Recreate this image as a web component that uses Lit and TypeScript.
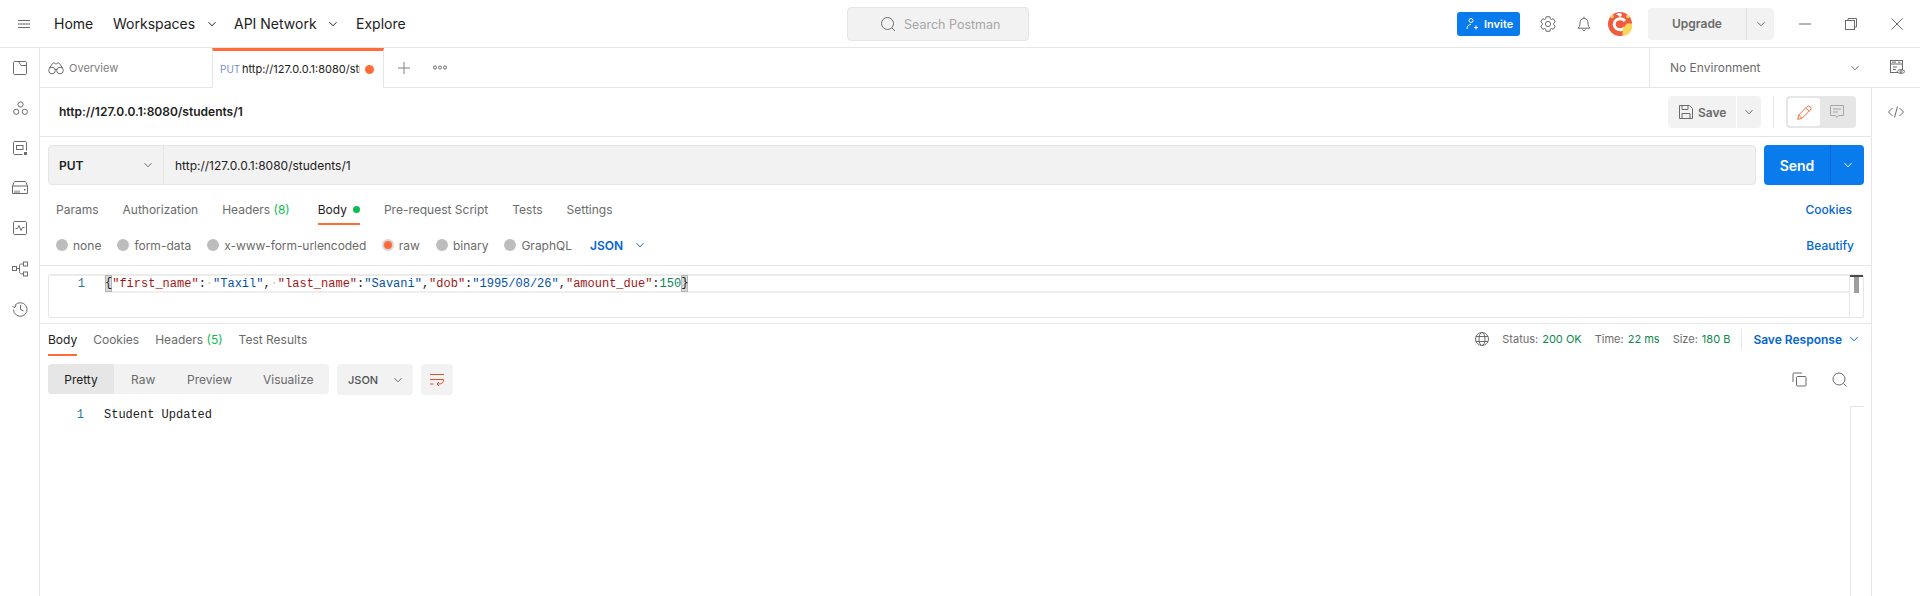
import { LitElement, html, css, svg } from "lit";
import { customElement } from "lit/decorators.js";

const chev = (c = "#6b6b6b", s = 10) => html`<svg class="chev" width=${s} height=${s} viewBox="0 0 10 10" fill="none" stroke=${c} stroke-width="1"><path d="M1.5 3.2 5 6.8l3.5-3.6"/></svg>`;
const ic = (w: number, h: number, body: unknown, stroke = "#6b6b6b") => html`<svg width=${w} height=${h} viewBox="0 0 ${w} ${h}" fill="none" stroke=${stroke} stroke-width="1">${body}</svg>`;

const gearPath = (() => {
  const pts: string[] = [];
  for (let i = 0; i < 6; i++) {
    const a = (Math.PI / 3) * i - Math.PI / 2;
    const p = (r: number, d: number) => `${(8 + r * Math.cos(a + d)).toFixed(2)} ${(8 + r * Math.sin(a + d)).toFixed(2)}`;
    pts.push(`${p(5.6, -0.42)}L${p(7.5, -0.26)}L${p(7.5, 0.26)}L${p(5.6, 0.42)}`);
  }
  return "M" + pts.join("L") + "Z";
})();

@customElement("app-root")
export class AppRoot extends LitElement {
  static styles = css`
    :host { display: block; height: 596px; overflow: hidden; background: #fff; font-family: Inter, "Noto Sans", sans-serif; font-size: 12px; color: #6b6b6b; }
    * { box-sizing: border-box; }
    svg { display: block; flex: none; }
    .top { height: 48px; border-bottom: 1px solid #e6e6e6; display: flex; align-items: center; position: relative; }
    .burger { width: 54px; padding-left: 17px; }
    .nav { display: flex; align-items: center; font-size: 14px; color: #212121; }
    .nav span { white-space: nowrap; }
    .home { width: 59px; } .ws { width: 87px; } .api { width: 87px; }
    .navchev { width: 34px; padding-left: 7px; }
    .navchev2 { width: 35px; padding-left: 7px; }
    .search-wrap { position: absolute; left: 847px; top: 7px; }
    .search { width: 182px; height: 34px; background: #f2f2f2; border: 1px solid #e6e6e6; border-radius: 4px; display: flex; align-items: center; padding-left: 32px; gap: 8px; color: #a6a6a6; font-size: 12.5px; }
    .top-right { margin-left: auto; display: flex; align-items: center; height: 100%; }
    .invite { width: 63px; height: 24px; background: #097bed; border-radius: 3px; color: #fff; font-weight: 600; font-size: 11px; display: flex; align-items: center; padding-left: 9px; gap: 6px; }
    .gear { margin-left: 20px; } .bell { margin-left: 21px; } .avatar { margin-left: 17px; }
    .upgrade { margin-left: 16px; width: 126px; height: 32px; background: #f2f2f2; border-radius: 4px; display: flex; align-items: center; font-weight: 600; }
    .upgrade b { width: 99px; text-align: center; font-weight: 600; border-right: 1px solid #e0e0e0; line-height: 32px; }
    .upgrade i { flex: 1; display: flex; justify-content: center; }
    .win { display: flex; align-items: center; margin-left: 25px; gap: 34px; padding-right: 17px; }
    .main { display: flex; height: 548px; }
    .side { width: 40px; flex: none; border-right: 1px solid #e6e6e6; display: flex; flex-direction: column; align-items: center; padding-top: 13px; padding-left: 1px; }
    .side div { height: 40px; display: flex; justify-content: center; }
    .center { flex: 1; min-width: 0; display: flex; flex-direction: column; }
    .tabs { height: 40px; border-bottom: 1px solid #e6e6e6; display: flex; flex: none; }
    .tab-ov { width: 172px; display: flex; align-items: center; padding-left: 8px; gap: 5px; color: #808080; font-size: 11px; }
    .tab-act { width: 172px; margin-bottom: -1px; background: #fff; height: 40px; border-top: 3px solid #ff6c37; border-left: 1px solid #e6e6e6; border-right: 1px solid #e6e6e6; border-bottom: 1px solid #fff; display: flex; align-items: center; padding-left: 7px; position: relative; z-index: 1; }
    .tab-act .m { font-size: 10px; color: #7a8fce; width: 22px; }
    .tab-act .u { width: 118px; overflow: hidden; white-space: nowrap; color: #212121; font-size: 11px; }
    .dot { width: 9px; height: 9px; border-radius: 50%; background: #ff6c37; margin-left: 5px; }
    .plus { margin-left: 14px; padding-top: 14px; } .more { margin-left: 23px; padding-top: 17px; }
    .env { margin-left: auto; width: 271px; border-left: 1px solid #e6e6e6; display: flex; align-items: center; padding-left: 20px; }
    .env .t { width: 180px; font-size: 12px; }
    .env .e { margin-left: 30px; }
    .body { flex: 1; display: flex; min-height: 0; }
    .work { flex: 1; min-width: 0; display: flex; flex-direction: column; }
    .rail { width: 49px; flex: none; border-left: 1px solid #e6e6e6; display: flex; justify-content: center; padding-top: 17px; padding-right: 1px; }
    .name { height: 49px; flex: none; border-bottom: 1px solid #e6e6e6; display: flex; align-items: center; padding-left: 19px; color: #212121; font-weight: 600; }
    .name > span { margin-top: -2px; }
    .name-r { margin-left: auto; display: flex; align-items: center; padding-right: 15px; }
    .save { width: 68px; height: 32px; background: #f2f2f2; border-radius: 4px 0 0 4px; display: flex; align-items: center; padding-left: 11px; gap: 5px; color: #6b6b6b; }
    .save span { font-weight: 600; }
    .savec { width: 24px; height: 32px; margin-left: 1px; background: #f2f2f2; border-radius: 0 4px 4px 0; display: flex; align-items: center; justify-content: center; }
    .vdiv { width: 1px; height: 32px; background: #e6e6e6; margin: 0 12px; }
    .toggle { width: 70px; height: 32px; background: #e6e6e6; border-radius: 4px; padding: 2px; display: flex; }
    .toggle div { width: 32px; height: 28px; display: flex; align-items: center; justify-content: center; border-radius: 3px; }
    .toggle .on { background: #fff; }
    .toggle .off { margin-left: 1px; }
    .bar { margin: 8px 7px 0 8px; height: 40px; display: flex; flex: none; }
    .bar-in { flex: 1; display: flex; background: #f2f2f2; border: 1px solid #e6e6e6; border-radius: 4px; align-items: center; }
    .method { width: 115px; height: 100%; border-right: 1px solid #e6e6e6; display: flex; align-items: center; padding-left: 10px; color: #212121; font-weight: 600; justify-content: space-between; padding-right: 10px; }
    .url { padding-left: 11px; color: #212121; }
    .send { margin-left: 8px; width: 100px; background: #097bed; border-radius: 4px; color: #fff; display: flex; align-items: center; font-weight: 600; font-size: 14px; }
    .send b { width: 67px; height: 100%; font-weight: 600; display: flex; align-items: center; justify-content: center; border-right: 1px solid #0265d2; }
    .send i { flex: 1; display: flex; justify-content: center; }
    .rtabs { height: 32px; flex: none; margin-top: 8px; display: flex; padding: 0 19px 0 8px; justify-content: space-between; }
    .rtabs .l { display: flex; gap: 24px; padding-left: 8px; }
    .t { display: flex; align-items: center; height: 32px; white-space: nowrap; position: relative; }
    .rtabs .bodytab { margin-left: 4px; }
    .act { color: #212121; }
    .act::after { content: ""; position: absolute; left: 0; right: 0; bottom: 0; height: 2px; background: #ff6c37; }
    .num { color: #0cbb52; }
    .rdot { width: 7px; height: 7px; background: #0cbb52; border-radius: 50%; margin-left: 6px; }
    .link { color: #0265d2; font-weight: 500; }
    .radios { height: 41px; flex: none; border-bottom: 1px solid #e6e6e6; display: flex; align-items: center; padding: 0 17px 0 16px; }
    .r { display: flex; align-items: center; gap: 5px; margin-right: 16px; }
    .r.x { letter-spacing: -0.06px; margin-right: 15.5px; }
    .c { width: 12px; height: 12px; border-radius: 50%; background: #bdbdbd; }
    .c.sel { background: #ff6c37; border: 2px solid #d6d6d6; }
    .js { color: #0265d2; font-weight: 600; display: flex; align-items: center; gap: 12px; margin-left: 2px; }
    .beaut { margin-left: auto; }
    .editor { margin: 8px 7px 0 8px; height: 44px; flex: none; border: 1px solid #e6e6e6; border-top: 2px solid #ebebeb; border-radius: 3px; display: flex; font-family: "Liberation Mono", monospace; font-size: 12px; }
    .ln { width: 36px; text-align: right; color: #237893; line-height: 16px; }
    .lines { flex: 1; margin-left: 20px; }
    .code { height: 17px; line-height: 16px; white-space: pre; border-bottom: 2px solid #eee; }
    .bk { display: inline-block; vertical-align: top; height: 17px; margin-top: -1px; line-height: 17px; background: #d9d9d9; box-shadow: inset 0 0 0 1px #b5b5b5; color: #212121; }
    .k { color: #a31515; } .s { color: #0451a5; } .n { color: #098658; } .p { color: #212121; }
    .w { color: #c8c8c8; }
    .sb { width: 14px; border-left: 1px solid #e6e6e6; position: relative; }
    .sb::before { content: ""; position: absolute; left: 0; right: 0; top: -1px; height: 2px; background: #4a4a4a; }
    .sb::after { content: ""; position: absolute; left: 4px; width: 5px; top: 1px; height: 16px; background: #9e9e9e; }
    .resp { flex: 1; min-height: 0; border-top: 1px solid #e6e6e6; margin-top: 5px; padding: 0 7px 0 8px; display: flex; flex-direction: column; }
    .rhead { height: 32px; display: flex; justify-content: space-between; align-items: stretch; flex: none; }
    .rhead .l { display: flex; gap: 16px; }
    .rhead .t { padding-bottom: 2px; }
    .stats { display: flex; align-items: center; font-size: 11px; padding-bottom: 2px; }
    .stats .g { color: #0b8a4a; }
    .stats .lab { margin-left: 13px; margin-right: 4px; }
    .stats .sep { width: 1px; height: 20px; background: #e6e6e6; margin: 0 11px 0 11px; }
    .stats .link { display: flex; align-items: center; gap: 7px; font-size: 12px; font-weight: 600; padding-right: 5px; }
    .tools { margin-top: 8px; display: flex; align-items: flex-start; flex: none; height: 31px; }
    .seg { width: 281px; height: 30px; background: #f2f2f2; border-radius: 4px; display: flex; align-items: center; overflow: hidden; }
    .seg span { white-space: nowrap; }
    .seg .on { width: 66px; height: 100%; background: #e6e6e6; color: #212121; display: flex; align-items: center; justify-content: center; margin-right: 17px; }
    .seg .raw { width: 56px; } .seg .prev { width: 76px; }
    .fmt { margin-left: 8px; width: 76px; height: 31px; background: #f2f2f2; border-radius: 4px; display: flex; align-items: center; padding-left: 11px; gap: 15px; color: #505050; font-size: 11px; font-weight: 500; }
    .wrap { margin-left: 8px; width: 32px; height: 31px; background: #f2f2f2; border-radius: 4px; display: flex; align-items: center; justify-content: center; }
    .tr { margin-left: auto; display: flex; align-items: center; gap: 25px; padding-right: 17px; height: 31px; }
    .out { flex: 1; display: flex; margin-top: 12px; font-family: "Liberation Mono", monospace; }
    .out .ln2 { width: 36px; text-align: right; color: #237893; line-height: 16px; }
    .out .tx { margin-left: 20px; color: #212121; line-height: 16px; flex: 1; }
    .osb { width: 14px; border-left: 1px solid #e6e6e6; border-top: 1px solid #e6e6e6; margin-top: -1px; }
  `;

  render() {
    return html`
      <div class="top">
        <div class="burger">${ic(14, 10, svg`<path d="M1 1.5h12M1 5h12M1 8.5h12" stroke="#6b6b6b"/>`)}</div>
        <div class="nav">
          <span class="home">Home</span>
          <span class="ws">Workspaces</span><span class="navchev">${chev("#212121")}</span>
          <span class="api">API Network</span><span class="navchev2">${chev("#212121")}</span>
          <span>Explore</span>
        </div>
        <div class="search-wrap">
          <div class="search">
            ${ic(16, 16, svg`<circle cx="7.5" cy="7.5" r="6"/><path d="m12 12 3 3"/>`)}
            <span>Search Postman</span>
          </div>
        </div>
        <div class="top-right">
          <div class="invite">${ic(12, 14, svg`<circle cx="5" cy="3.5" r="2"/><path d="M1 12c0-3 1.5-4.5 4-4.5M8 10.5h4M10 8.5v4" />`, "#fff")}<span>Invite</span></div>
          <div class="gear">${ic(16, 16, svg`<circle cx="8" cy="8" r="2.6"/><path d=${gearPath} stroke-linejoin="round"/>`)}</div>
          <div class="bell">${ic(14, 16, svg`<path d="M7 2.5c-2.6 0-4 2-4 4.5 0 2.6-.8 4-2 5.2h12c-1.2-1.2-2-2.6-2-5.2 0-2.5-1.4-4.5-4-4.5zM7 .7v1.8M5.5 13.5c.3 1.4 2.7 1.4 3 0"/>`)}</div>
          <div class="avatar"><svg width="24" height="24" viewBox="0 0 24 24"><circle cx="12" cy="12" r="12" fill="#ef5b3c"/><path d="M10 1l-2 2 6 0-2-2z" fill="#fff"/><circle cx="12" cy="3" r="1.8" fill="#fff"/><path d="M17 15.5a6 5.5 0 1 1 0-6.500" fill="none" stroke="#fff" stroke-width="3"/><path d="M14.500 17l4.500-5.500 5 0v5a12 12 0 0 1-6 7l-3.500 0z" fill="#fcd65c"/><circle cx="4" cy="4.500" r="1.800" fill="#fcd65c"/><circle cx="20" cy="4.500" r="1.800" fill="#fcd65c"/></svg></div>
          <div class="upgrade"><b>Upgrade</b><i>${chev()}</i></div>
          <div class="win">
            ${ic(12, 12, svg`<path d="M0 6h12"/>`)}
            ${ic(12, 12, svg`<rect x=".5" y="2.5" width="9" height="9" /><path d="M3 2.5V.5h8.500V9H9.500"/>`)}
            ${ic(12, 12, svg`<path d="m.5.5 11 11M11.500.5l-11 11"/>`)}
          </div>
        </div>
      </div>
      <div class="main">
        <div class="side">
          <div>${ic(14, 14, svg`<rect x=".5" y=".5" width="13" height="13" rx="1"/><path d="M5.500.5 8 4.500h5.500"/>`)}</div>
          <div>${ic(15, 15, svg`<circle cx="7.5" cy="3.5" r="2.600"/><circle cx="3.200" cy="10.800" r="2.600"/><circle cx="11.800" cy="10.800" r="2.600"/>`)}</div>
          <div>${ic(14, 14, svg`<path d="M13.500 9.500V1.500a1 1 0 0 0-1-1h-11a1 1 0 0 0-1 1v11a1 1 0 0 0 1 1h8"/><rect x="3.500" y="4.500" width="6.500" height="4"/><rect x="11" y="11" width="3" height="3" fill="#6b6b6b" stroke="none"/>`)}</div>
          <div>${ic(16, 13, svg`<path d="M.5 5 2 1.500C2.500.8 3 .5 4 .5h8c1 0 1.500.3 2 1L15.500 5v7.500H.5zM.5 5h15M3 12.500V9.500M5 12.500V9.500M7 12.500V9.500"/><rect x="12" y="8" width="1.500" height="1.500" fill="#6b6b6b" stroke="none"/>`)}</div>
          <div>${ic(14, 14, svg`<rect x=".5" y=".5" width="13" height="13" rx="1"/><path d="M2.500 7.500h2l1.500-3 2 5 1.500-3h2"/>`)}</div>
          <div>${ic(16, 16, svg`<rect x=".5" y="5.500" width="4" height="4"/><rect x="11.500" y="1" width="4" height="4"/><rect x="11.500" y="11" width="4" height="4"/><path d="M4.500 7.500h3M7.500 4.500v6c0 2 1 2.500 4 2.500M7.500 4.500c0-1.500 1-1.500 4-1.500"/>`)}</div>
          <div>${ic(16, 16, svg`<path d="M2.800 4.500a6.800 6.800 0 1 1-1.300 4M.5 5.500l2.500 1 1-2.500M8.500 4v4.500l3 1.500"/>`)}</div>
        </div>
        <div class="center">
          <div class="tabs">
            <div class="tab-ov">${ic(16, 14, svg`<circle cx="4" cy="9.500" r="3.300"/><circle cx="12" cy="9.500" r="3.300"/><path d="M1.500 7 4.500 2.500c1-1 2-1 3 .5h1c1-1.500 2-1.500 3-.5l3 4.500M7 8.500h2"/>`)}<span>Overview</span></div>
            <div class="tab-act"><span class="m">PUT</span><span class="u">http://127.0.0.1:8080/students/1</span><span class="dot"></span></div>
            <div class="plus">${ic(12, 12, svg`<path d="M6 0v12M0 6h12"/>`, "#808080")}</div>
            <div class="more">${ic(14, 5, svg`<circle cx="2" cy="2.5" r="1.500"/><circle cx="7" cy="2.5" r="1.500"/><circle cx="12" cy="2.5" r="1.500"/>`)}</div>
            <div class="env"><span class="t">No Environment</span>${chev()}<span class="e">${ic(15, 15, svg`<rect x=".5" y=".5" width="12" height="12" /><path d="M.5 4h12M3 7h4M3 9.500h3M8 2.200h2.500M2 2.200h4"/><path d="M7 11.500c2-2.500 6-2.500 8 0-2 2.500-6 2.500-8 0z" fill="#fff"/><circle cx="11" cy="11.500" r="1" />`)}</span></div>
          </div>
          <div class="body">
            <div class="work">
              <div class="name">
                <span>http://127.0.0.1:8080/students/1</span>
                <div class="name-r">
                  <div class="save">${ic(14, 14, svg`<path d="M.5.5h10l3 3v10H.5zM3 .5v4h6v-4M3 13.5V8.500h8v5"/>`)}<span>Save</span></div>
                  <div class="savec">${chev()}</div>
                  <div class="vdiv"></div>
                  <div class="toggle">
                    <div class="on">${ic(15, 15, svg`<path d="M.7 14.300l1-4.300 8.300-8.300a2 2 0 0 1 3.300 3.300L5 13.300zM8.800 3l3.200 3.200M1.700 10l3.300 3.300"/>`, "#ff6c37")}</div>
                    <div class="off">${ic(14, 14, svg`<path d="M.5.5h13v10H8.500L7 12.500l-1.500-2H.5zM3 4h8M3 7h5"/>`, "#a6a6a6")}</div>
                  </div>
                </div>
              </div>
              <div class="bar">
                <div class="bar-in">
                  <div class="method"><span>PUT</span>${chev()}</div>
                  <div class="url">http://127.0.0.1:8080/students/1</div>
                </div>
                <div class="send"><b>Send</b><i>${chev("#fff")}</i></div>
              </div>
              <div class="rtabs">
                <div class="l">
                  <div class="t">Params</div><div class="t">Authorization</div>
                  <div class="t">Headers&nbsp;<span class="num">(8)</span></div>
                  <div class="t act bodytab">Body<span class="rdot"></span></div>
                  <div class="t">Pre-request Script</div><div class="t">Tests</div><div class="t">Settings</div>
                </div>
                <div class="t link">Cookies</div>
              </div>
              <div class="radios">
                <div class="r"><span class="c"></span>none</div>
                <div class="r"><span class="c"></span>form-data</div>
                <div class="r x"><span class="c"></span>x-www-form-urlencoded</div>
                <div class="r"><span class="c sel"></span>raw</div>
                <div class="r"><span class="c"></span>binary</div>
                <div class="r"><span class="c"></span>GraphQL</div>
                <div class="js">JSON ${chev("#0265d2")}</div>
                <div class="link beaut">Beautify</div>
              </div>
              <div class="editor">
                <div class="ln">1</div>
                <div class="lines"><div class="code"><span class="bk">{</span><span class="k">"first_name"</span><span class="p">:</span><span class="w">·</span><span class="s">"Taxil"</span><span class="p">,</span><span class="w">·</span><span class="k">"last_name"</span><span class="p">:</span><span class="s">"Savani"</span><span class="p">,</span><span class="k">"dob"</span><span class="p">:</span><span class="s">"1995/08/26"</span><span class="p">,</span><span class="k">"amount_due"</span><span class="p">:</span><span class="n">150</span><span class="bk">}</span></div></div>
                <div class="sb"></div>
              </div>
              <div class="resp">
                <div class="rhead">
                  <div class="l">
                    <div class="t act">Body</div><div class="t">Cookies</div>
                    <div class="t">Headers&nbsp;<span class="num">(5)</span></div><div class="t">Test Results</div>
                  </div>
                  <div class="stats">
                    ${ic(14, 14, svg`<circle cx="7" cy="7" r="6.5"/><ellipse cx="7" cy="7" rx="3" ry="6.500"/><path d="M1 4.500h12M1 9.500h12"/>`)}
                    <span class="lab">Status:</span><span class="g">200 OK</span>
                    <span class="lab">Time:</span><span class="g">22 ms</span>
                    <span class="lab">Size:</span><span class="g">180 B</span>
                    <span class="sep"></span>
                    <span class="link">Save Response ${chev("#0265d2")}</span>
                  </div>
                </div>
                <div class="tools">
                  <div class="seg"><span class="on">Pretty</span><span class="raw">Raw</span><span class="prev">Preview</span><span>Visualize</span></div>
                  <div class="fmt">JSON ${chev()}</div>
                  <div class="wrap">${ic(14, 14, svg`<path d="M0 1.500h14M0 6.500h13.500c0 4-2 4.500-6 4.500M0 11h3.500M9 9 7 11l2 2"/>`, "#e0522a")}</div>
                  <div class="tr">
                    ${ic(15, 15, svg`<rect x="4.500" y="4.500" width="9.500" height="9.500" rx="1"/><path d="M10 1H2a1 1 0 0 0-1 1v8"/>`)}
                    ${ic(15, 15, svg`<circle cx="7" cy="7" r="6"/><path d="m11.500 11.500 3 3"/>`)}
                  </div>
                </div>
                <div class="out">
                  <div class="ln2">1</div><div class="tx">Student Updated</div>
                  <div class="osb"></div>
                </div>
              </div>
            </div>
            <div class="rail">${ic(16, 14, svg`<path d="M4.500 3 .5 7l4 4M11.500 3l4 4-4 4M9.500 1.500l-3 11"/>`)}</div>
          </div>
        </div>
      </div>
    `;
  }
}
